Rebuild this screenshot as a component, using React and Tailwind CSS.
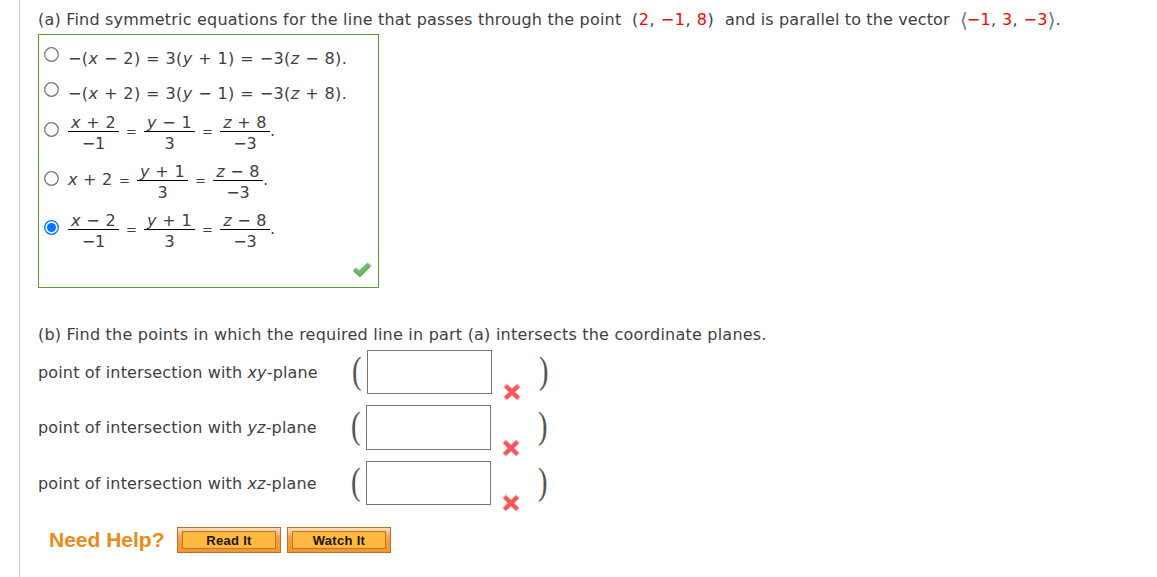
import clsx from "clsx";

const fractionOptions = [
  {
    id: "c",
    terms: [
      { v: "x", op: "+", n: "2", den: "−1" },
      { v: "y", op: "−", n: "1", den: "3" },
      { v: "z", op: "+", n: "8", den: "−3" },
    ],
  },
  {
    id: "d",
    terms: [
      { v: "x", op: "+", n: "2" },
      { v: "y", op: "+", n: "1", den: "3" },
      { v: "z", op: "−", n: "8", den: "−3" },
    ],
  },
  {
    id: "e",
    checked: true,
    terms: [
      { v: "x", op: "−", n: "2", den: "−1" },
      { v: "y", op: "+", n: "1", den: "3" },
      { v: "z", op: "−", n: "8", den: "−3" },
    ],
  },
];

const planes = [
  { name: "xy", gap: "ml-0", height: "h-[55px]", box: "h-[44px]", mark: "mt-[33px]" },
  { name: "yz", gap: "-ml-px", height: "h-[56px]", box: "h-[45px]", mark: "mt-[34px]" },
  { name: "xz", gap: "-ml-px", height: "h-[55px]", box: "h-[44px]", mark: "mt-[33px]" },
];

function Radio({ checked, className }) {
  return (
    <svg width="15" height="15" viewBox="0 0 15 15" className={clsx("shrink-0", className)}>
      <circle cx="7.5" cy="7.5" r="6.8" fill="#fff" stroke={checked ? "#0075ff" : "#767676"} strokeWidth="1.3" />
      {checked && <circle cx="7.5" cy="7.5" r="4.5" fill="#0075ff" />}
    </svg>
  );
}

function Check() {
  return (
    <svg width="20" height="16" viewBox="0 0 20 16">
      <path
        d="M1 8.5 4 5.8 7 8.6 15.5 1 19 3.5 8 15Z"
        fill="#6cba66"
        stroke="#8fca8a"
        strokeWidth="1"
        strokeLinejoin="round"
      />
      <path d="M2.5 9.8 8 14.4 18 4.4" fill="none" stroke="#4f9d4b" strokeWidth="1" />
    </svg>
  );
}

function Cross() {
  return (
    <svg width="18" height="18" viewBox="0 0 18 18">
      <path d="M3.8 4 14.2 14M14.2 4 3.8 14" stroke="#ff9a9a" strokeWidth="5" strokeLinecap="square" strokeLinejoin="round" />
      <path d="M4 4.2 14 14M14 4.2 4 14" stroke="#fb5458" strokeWidth="3.8" strokeLinecap="round" />
    </svg>
  );
}

function Term({ v, op, n, den, last }) {
  const top = (
    <>
      <i>{v}</i> {op} {n}
    </>
  );
  if (!den) {
    return <span className="w-[44px] pt-[12px] tracking-[0.2px]">{top}</span>;
  }
  return (
    <span className={clsx("flex flex-col text-center", last ? "w-[50px]" : "w-[51px]")}>
      <span className="h-[23px] border-b border-black pt-[4px] tracking-[0.3px]">{top}</span>
      <span className="pt-[2px]">{den}</span>
    </span>
  );
}

function FractionOption({ terms, checked }) {
  return (
    <div className="flex h-[49px] items-start">
      <Radio checked={checked} className="mt-[13px] mr-[9px]" />
      {terms.map((t, i) => (
        <span key={t.v} className="flex">
          {i > 0 && <span className="w-[25px] pt-[13px] text-center text-[13px]">=</span>}
          <Term {...t} last={i === 2} />
        </span>
      ))}
      <span className="pt-[12px]">.</span>
    </div>
  );
}

function LinearOption({ children }) {
  return (
    <div className="flex h-[35px] items-start">
      <Radio className="mt-[8px] mr-[9px]" />
      <span className="pt-[10px] tracking-[0.43px]">{children}</span>
    </div>
  );
}

function HelpButton({ children }) {
  return (
    <button className="h-[26px] w-[104px] border border-[#b5722a] bg-linear-to-b from-[#fde0c0] via-[#f99f42] via-40% to-[#f8922e] px-[4px] py-[3px]">
      <span className="flex h-[18px] items-center justify-center border border-[#b5792c] bg-[#fdb940] font-['Liberation_Sans',Arial,sans-serif] text-[13px] leading-none font-bold tracking-[0.3px] text-[#1c1500]">
        {children}
      </span>
    </button>
  );
}

export default function App() {
  return (
    <div className="h-[577px] w-[1157px] overflow-hidden bg-white pl-[19px] font-['DejaVu_Sans',Verdana,sans-serif] text-[16px] leading-[20px] whitespace-nowrap text-[#404040]">
      <div className="h-full border-l border-[#ccc] pl-[18px]">
        <div className="flex h-[34px] pt-[10px]">
          <span className="w-[594px] tracking-[0.2px]">
            (a) Find symmetric equations for the line that passes through the point
          </span>
          <span className="w-[93px] tracking-[0.55px]">
            (<span className="text-[#f00]">2</span>, <span className="text-[#f00]">−1</span>,{" "}
            <span className="text-[#f00]">8</span>)
          </span>
          <span className="w-[235px] tracking-[0.13px]">and is parallel to the vector</span>
          <span className="text-[20px] text-[#777]">⟨</span>
          <span className="-ml-px tracking-[0.35px]">
            <span className="text-[#f00]">−1</span>, <span className="text-[#f00]">3</span>,{" "}
            <span className="text-[#f00]">−3</span>
          </span>
          <span className="text-[20px] text-[#777]">⟩</span>
          <span>.</span>
        </div>

        <div className="flex h-[254px] w-[341px] flex-col border border-[#5b9f31] pt-[4px] pl-[5px]">
          <LinearOption>
            −(<i>x</i> − 2) = 3(<i>y</i> + 1) = −3(<i>z</i> − 8).
          </LinearOption>
          <LinearOption>
            −(<i>x</i> + 2) = 3(<i>y</i> − 1) = −3(<i>z</i> + 8).
          </LinearOption>
          {fractionOptions.map((o) => (
            <FractionOption key={o.id} terms={o.terms} checked={o.checked} />
          ))}
          <div className="flex justify-end pt-[6px] pr-[6px]">
            <Check />
          </div>
        </div>

        <div className="h-[62px] pt-[37px] tracking-[0.22px]">
          (b) Find the points in which the required line in part (a) intersects the coordinate planes.
        </div>

        {planes.map((p) => (
          <div key={p.name} className={clsx("flex items-start", p.height)}>
            <span className="w-[314px] pt-[13px] tracking-[0.15px]">
              point of intersection with <i>{p.name}</i>-plane
            </span>
            <div className={clsx("flex items-start", p.gap)}>
              <span className="w-[15px] origin-left scale-x-75 pt-[10px] font-['Liberation_Serif',serif] text-[38px] text-[#555]">
                (
              </span>
              <input className={clsx("w-[125px] border border-[#767676]", p.box)} />
              <span className={clsx("ml-[11px]", p.mark)}>
                <Cross />
              </span>
              <span className="ml-[18px] origin-left scale-x-75 pt-[10px] font-['Liberation_Serif',serif] text-[38px] text-[#555]">
                )
              </span>
            </div>
          </div>
        ))}

        <div className="flex items-start pt-[11px] pl-[11px]">
          <span className="w-[128px] pt-[3px] font-['Liberation_Sans',Arial,sans-serif] text-[21px] font-bold text-[#ec8a16]">
            Need Help?
          </span>
          <div className="flex gap-[6px]">
            <HelpButton>Read It</HelpButton>
            <HelpButton>Watch It</HelpButton>
          </div>
        </div>
      </div>
    </div>
  );
}
